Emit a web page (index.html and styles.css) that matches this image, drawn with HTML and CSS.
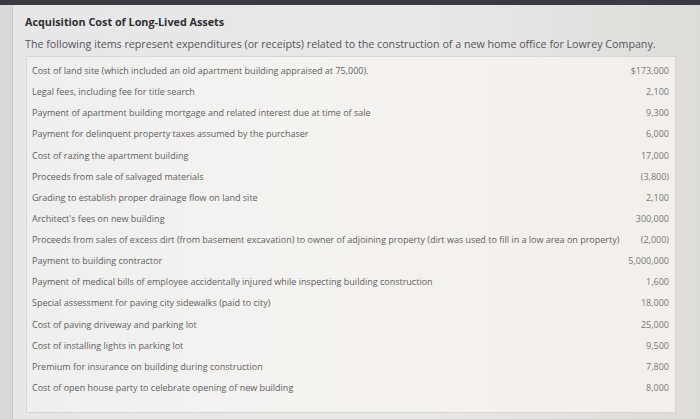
FILE: index.html
```html
<!DOCTYPE html>
<html>
<head>
<meta charset="utf-8">
<link rel="stylesheet" href="styles.css">
</head>
<body>
<div class="topbar"></div>
<div class="main">
  <div class="sidebar"></div>
  <div class="content">
    <h1 class="title">Acquisition Cost of Long-Lived Assets</h1>
    <p class="intro">The following items represent expenditures (or receipts) related to the construction of a new home office for Lowrey Company.</p>
    <div class="table">
      <div class="row"><span class="label">Cost of land site (which included an old apartment building appraised at 75,000).</span><span class="amt">$173,000</span></div>
      <div class="row"><span class="label">Legal fees, including fee for title search</span><span class="amt">2,100</span></div>
      <div class="row"><span class="label">Payment of apartment building mortgage and related interest due at time of sale</span><span class="amt">9,300</span></div>
      <div class="row"><span class="label">Payment for delinquent property taxes assumed by the purchaser</span><span class="amt">6,000</span></div>
      <div class="row"><span class="label">Cost of razing the apartment building</span><span class="amt">17,000</span></div>
      <div class="row"><span class="label">Proceeds from sale of salvaged materials</span><span class="amt">(3,800)</span></div>
      <div class="row"><span class="label">Grading to establish proper drainage flow on land site</span><span class="amt">2,100</span></div>
      <div class="row"><span class="label">Architect's fees on new building</span><span class="amt">300,000</span></div>
      <div class="row"><span class="label">Proceeds from sales of excess dirt (from basement excavation) to owner of adjoining property (dirt was used to fill in a low area on property)</span><span class="amt">(2,000)</span></div>
      <div class="row"><span class="label">Payment to building contractor</span><span class="amt">5,000,000</span></div>
      <div class="row"><span class="label">Payment of medical bills of employee accidentally injured while inspecting building construction</span><span class="amt">1,600</span></div>
      <div class="row"><span class="label">Special assessment for paving city sidewalks (paid to city)</span><span class="amt">18,000</span></div>
      <div class="row"><span class="label">Cost of paving driveway and parking lot</span><span class="amt">25,000</span></div>
      <div class="row"><span class="label">Cost of installing lights in parking lot</span><span class="amt">9,500</span></div>
      <div class="row"><span class="label">Premium for insurance on building during construction</span><span class="amt">7,800</span></div>
      <div class="row"><span class="label">Cost of open house party to celebrate opening of new building</span><span class="amt">8,000</span></div>
    </div>
  </div>
</div>
</body>
</html>
```

FILE: styles.css
```css
html, body {
  margin: 0;
  padding: 0;
  height: 100%;
  overflow: hidden;
}
body {
  font-family: "Open Sans", "Noto Sans", sans-serif;
  background: #e4e3e2;
}
.topbar {
  height: 5px;
  background: #3a3a40;
}
.main {
  display: flex;
  height: 414px;
}
.sidebar {
  width: 12px;
  background: #d9d9da;
  border-right: 1px solid #c9c9ca;
}
.content {
  flex: 1;
  padding-left: 12px;
  background: linear-gradient(to right, #e7e7e9 0%, #e9e8e7 60%, #dedcd8 100%);
}
.title {
  margin: 0;
  padding-top: 9px;
  font-size: 10.8px;
  line-height: 15px;
  font-weight: 700;
  color: #2f2f33;
}
.intro {
  margin: 0;
  padding-top: 8px;
  font-size: 10.7px;
  line-height: 14px;
  color: #55555a;
  white-space: nowrap;
}
.table {
  margin-top: 5px;
  margin-left: 1px;
  width: 650px;
  box-sizing: border-box;
  padding: 3px 6px 14px 5px;
  border: 1px solid #d8d6d2;
  background: linear-gradient(to right, #efefee 0%, #f5f3f0 40%, #f3f0eb 100%);
  display: flex;
  flex-direction: column;
}
.row {
  display: flex;
  justify-content: space-between;
  align-items: center;
  height: 21.13px;
  font-size: 9px;
  white-space: nowrap;
}
.label {
  color: #5e5e62;
}
.amt {
  color: #76767a;
}
```
